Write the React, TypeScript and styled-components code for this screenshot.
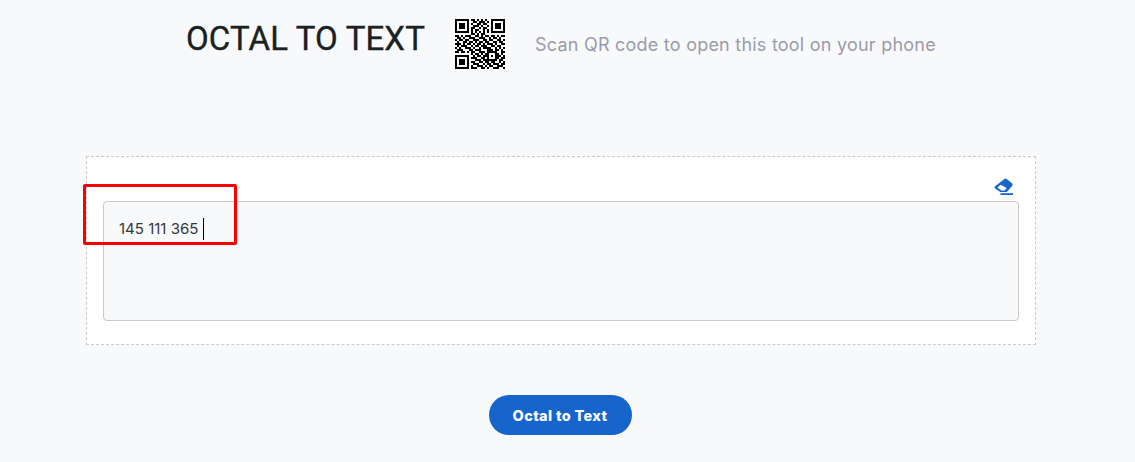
import React from "react";
import styled, { createGlobalStyle } from "styled-components";

const Global = createGlobalStyle`
  html, body { margin: 0; padding: 0; background: #f8f9fb; }
  body { width: 1135px; height: 462px; overflow: hidden; font-family: Inter, "Liberation Sans", sans-serif; }
`;

const Page = styled.main`
  display: flex;
  flex-direction: column;
  align-items: center;
  width: 1122px;
  height: 462px;
  background: #f8f9fb;
`;

const Header = styled.header`
  display: flex;
  align-items: center;
  width: 950px;
  height: 86px;
  padding: 2px 0 0 100px;
  box-sizing: border-box;
`;

const Title = styled.h1`
  width: 238px;
  margin: 0 31px 12px 0;
  font-family: Roboto, sans-serif;
  font-size: 33px;
  font-weight: 400;
  letter-spacing: 0.13px;
  -webkit-text-stroke: 0.35px #1a2123;
  white-space: nowrap;
  color: #1a2123;
`;

const Hint = styled.p`
  margin: 0 0 0 30px;
  font-family: Inter, sans-serif;
  font-size: 18px;
  letter-spacing: 0.23px;
  white-space: nowrap;
  color: #9a9ca8;
`;

const Card = styled.section`
  display: flex;
  flex-direction: column;
  box-sizing: border-box;
  width: 950px;
  height: 189px;
  margin-top: 70px;
  padding: 20px 16px 22px 16px;
  background: #fff;
  border: 1px dashed #c8cacd;
`;

const Tools = styled.div`
  display: flex;
  justify-content: flex-end;
  height: 24px;
`;

const InputBox = styled.div`
  box-sizing: border-box;
  height: 120px;
  padding: 16px 15px;
  background: #f8f9fb;
  border: 1px solid #c9c9c9;
  border-radius: 4px;
  font-family: Inter, sans-serif;
  font-size: 15px;
  line-height: 20px;
  color: #33363b;
`;

const Caret = styled.span`
  display: inline-block;
  width: 1px;
  height: 22px;
  margin-left: 5px;
  background: #000;
  vertical-align: -6px;
`;

const Highlight = styled.div`
  position: absolute;
  left: 83px;
  top: 184px;
  width: 154px;
  height: 61px;
  box-sizing: border-box;
  border: 3px solid #fb0000;
  border-radius: 2px;
`;

const Action = styled.button`
  width: 143px;
  height: 40px;
  margin: 50px 2px 0 0;
  border: 0;
  border-radius: 20px;
  background: #1565cc;
  color: #fff;
  font-family: Inter, sans-serif;
  font-size: 14.5px;
  font-weight: 800;
  letter-spacing: 0.35px;
`;

const EraserSvg = styled.svg`
  width: 20px;
  height: 18px;
  margin: 1px 5px 0 0;
`;

const QR_ROWS = [
  "1111111011010101001111111",
  "1000001001101110101000001",
  "1011101010011011001011101",
  "1011101001110100101011101",
  "1011101011001011001011101",
  "1000001010110010101000001",
  "1111111010101010101111111",
  "0000000011010110000000000",
  "1101011100110101101101011",
  "0110100111001110010110100",
  "1011011001110011011001101",
  "0100110110101101100110110",
  "1110101101011010111010011",
  "0101110010110111001101100",
  "1010011101001011110010101",
  "0111000110111000111011010",
  "1101101011001110111110011",
  "0000000010110101100011010",
  "1111111001011011101011101",
  "1000001011100110100011011",
  "1011101000111011111110110",
  "1011101011001101101100101",
  "1011101001110010110111011",
  "1000001010011101011001110",
  "1111111011100110100111001",
];

const QrCode = () => (
  <svg width="50" height="50" viewBox="0 0 25 25" shapeRendering="crispEdges" aria-label="QR code">
    {QR_ROWS.flatMap((row, y) =>
      row.split("").map((c, x) => (c === "1" ? <rect key={`${x}-${y}`} x={x} y={y} width="1" height="1" fill="#000" /> : null))
    )}
  </svg>
);

const EraserIcon = () => (
  <EraserSvg viewBox="0 0 20 18">
    <path
      fill="#1565cc"
      fillRule="evenodd"
      d="M10.2 1.2a1.8 1.8 0 0 1 2.5-.1l5.2 4.2a1.8 1.8 0 0 1 .2 2.6l-5.3 6H6.4L1.2 10.6a1.6 1.6 0 0 1-.1-2.4L10.2 1.2zM6.6 6.8 3.4 9.5l4 3h3.2l2.2-2.6-6.2-3.1z"
    />
    <rect x="6.5" y="15.2" width="12.5" height="1.8" fill="#1565cc" />
  </EraserSvg>
);

export default function App() {
  return (
    <Page>
      <Global />
      <Header>
        <Title>OCTAL TO TEXT</Title>
        <QrCode />
        <Hint>Scan QR code to open this tool on your phone</Hint>
      </Header>
      <Card>
        <Tools>
          <EraserIcon />
        </Tools>
        <InputBox>
          145 111 365
          <Caret />
        </InputBox>
      </Card>
      <Action>Octal to Text</Action>
      <Highlight />
    </Page>
  );
}
